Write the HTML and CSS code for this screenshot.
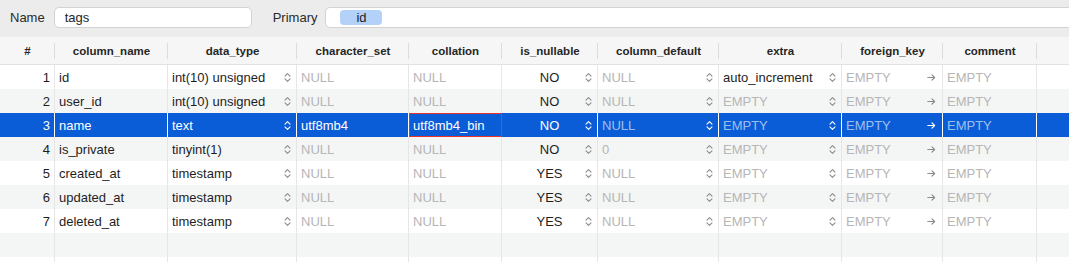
FILE: index.html
```html
<!DOCTYPE html>
<html lang="en">
<head>
  <meta charset="UTF-8">
  <title>Table structure - tags</title>
  <link rel="stylesheet" href="styles.css">
</head>
<body>
  <div class="toolbar">
    <label class="field-label">Name</label>
    <div class="text-box name-box">tags</div>
    <label class="field-label primary-label">Primary</label>
    <div class="text-box primary-box"><span class="token">id</span></div>
  </div>

  <div class="grid">
    <div class="row head">
      <div class="cell">#</div>
      <div class="cell">column_name</div>
      <div class="cell">data_type</div>
      <div class="cell">character_set</div>
      <div class="cell">collation</div>
      <div class="cell">is_nullable</div>
      <div class="cell">column_default</div>
      <div class="cell">extra</div>
      <div class="cell">foreign_key</div>
      <div class="cell">comment</div>
      <div class="cell"></div>
    </div>
    <div id="rows"></div>
    <div class="row filler">
      <div class="cell"></div><div class="cell"></div><div class="cell"></div><div class="cell"></div>
      <div class="cell"></div><div class="cell"></div><div class="cell"></div><div class="cell"></div>
      <div class="cell"></div><div class="cell"></div><div class="cell"></div>
    </div>
    <div class="row tail">
      <div class="cell"></div><div class="cell"></div><div class="cell"></div><div class="cell"></div>
      <div class="cell"></div><div class="cell"></div><div class="cell"></div><div class="cell"></div>
      <div class="cell"></div><div class="cell"></div><div class="cell"></div>
    </div>
  </div>

  <script>
    // column list for the tags table
    const columns = [
      ['id', 'int(10) unsigned', null, null, 'NO', null, 'auto_increment'],
      ['user_id', 'int(10) unsigned', null, null, 'NO', null, null],
      ['name', 'text', 'utf8mb4', 'utf8mb4_bin', 'NO', null, null],
      ['is_private', 'tinyint(1)', null, null, 'NO', '0', null],
      ['created_at', 'timestamp', null, null, 'YES', null, null],
      ['updated_at', 'timestamp', null, null, 'YES', null, null],
      ['deleted_at', 'timestamp', null, null, 'YES', null, null]
    ];
    const selected = 2;

    const stepper = '<svg class="stepper" width="7" height="11" viewBox="0 0 7 11"><path d="M1 4.2 L3.5 1.7 L6 4.2 M1 6.8 L3.5 9.3 L6 6.8" fill="none" stroke-width="1.1" stroke-linecap="round" stroke-linejoin="round"/></svg>';
    const arrow = '<svg class="arrow" width="9" height="9" viewBox="0 0 9 9"><path d="M0.8 4.5 H7.6 M5 1.9 L7.6 4.5 L5 7.1" fill="none" stroke-width="1.2" stroke-linecap="round" stroke-linejoin="round"/></svg>';

    function value(v, fallback) {
      if (v === null) return '<span class="muted">' + fallback + '</span>';
      return v;
    }

    const rowsEl = document.getElementById('rows');
    columns.forEach(function(c, i) {
      const row = document.createElement('div');
      row.className = 'row' + (i % 2 ? ' alt' : '') + (i === selected ? ' selected' : '');
      row.innerHTML =
        '<div class="cell num">' + (i + 1) + '</div>' +
        '<div class="cell">' + c[0] + '</div>' +
        '<div class="cell pick"><span class="val">' + c[1] + '</span>' + stepper + '</div>' +
        '<div class="cell">' + value(c[2], 'NULL') + '</div>' +
        '<div class="cell' + (i === selected ? ' editing' : '') + '">' + value(c[3], 'NULL') + '</div>' +
        '<div class="cell pick center"><span class="val">' + c[4] + '</span>' + stepper + '</div>' +
        '<div class="cell pick"><span class="val">' + (c[5] === '0' ? '<span class="muted">0</span>' : value(c[5], 'NULL')) + '</span>' + stepper + '</div>' +
        '<div class="cell pick"><span class="val">' + value(c[6], 'EMPTY') + '</span>' + stepper + '</div>' +
        '<div class="cell pick"><span class="val"><span class="muted">EMPTY</span></span>' + arrow + '</div>' +
        '<div class="cell"><span class="muted">EMPTY</span></div>' +
        '<div class="cell"></div>';
      rowsEl.appendChild(row);
    });
  </script>
</body>
</html>
```

FILE: styles.css
```css
body {
  margin: 0;
  font-family: "Liberation Sans", Arial, sans-serif;
  font-size: 13px;
  color: #1e1e1e;
  background: #fff;
  overflow: hidden;
}

/* Top bar */
.toolbar {
  display: flex;
  align-items: center;
  height: 37px;
  padding: 0 0 2px 10px;
  box-sizing: border-box;
  background: #ececec;
}

.field-label {
  color: #2a2a2a;
  font-size: 13px;
  margin-right: 9px;
}

.primary-label {
  margin-left: 21px;
  margin-right: 8px;
}

.text-box {
  height: 21px;
  box-sizing: border-box;
  background: #fff;
  border: 1px solid #d3d3d3;
  border-radius: 5px;
  display: flex;
  align-items: center;
}

.name-box {
  width: 198px;
  padding-left: 10px;
}

.primary-box {
  flex: 1;
  margin-right: -8px;
  padding-left: 14px;
}

.token {
  display: inline-block;
  width: 42px;
  height: 15px;
  line-height: 15px;
  text-align: center;
  background: #b4d1f9;
  border-radius: 4px;
  font-size: 13px;
}

/* Grid */
.row {
  display: grid;
  grid-template-columns: 55px 113px 129px 112px 93px 96px 121px 123px 101px 94px 1fr;
  height: 24px;
  background: #fff;
}

.row.alt {
  background: #f4f5f5;
}

.cell {
  border-right: 1px solid #e6e6e6;
  display: flex;
  align-items: center;
  padding: 0 4px;
  white-space: nowrap;
  overflow: hidden;
  min-width: 0;
  box-sizing: border-box;
}

.cell:last-child {
  border-right: none;
}

.head {
  height: 28px;
  background: #f6f6f6;
  border-bottom: 1px solid #e2e2e2;
  box-sizing: border-box;
}

.head .cell {
  justify-content: center;
  font-weight: bold;
  font-size: 11.5px;
  color: #262626;
  border-right: none;
  position: relative;
  padding-top: 1px;
}

.head .cell::after {
  content: "";
  position: absolute;
  right: 0;
  top: 6px;
  bottom: 5px;
  width: 1px;
  background: #dcdcdc;
}

.head .cell:last-child::after {
  display: none;
}

.num {
  justify-content: flex-end;
}

.pick {
  justify-content: space-between;
  padding-right: 5px;
}

.pick.center .val {
  flex: 1;
  text-align: center;
  padding-left: 8px;
}

.muted {
  color: #b6b6b6;
}

.stepper path,
.arrow path {
  stroke: #8c8c8c;
}

.arrow {
  margin-right: 1px;
}

/* Selected row */
.row.selected {
  background: #0b5cd7;
  color: #fff;
}

.row.selected .cell {
  border-right-color: #fff;
}

.row.selected .cell:last-child {
  border-right: none;
}

.row.selected .muted {
  color: rgba(255, 255, 255, 0.62);
}

.row.selected .stepper path,
.row.selected .arrow path {
  stroke: #fff;
}

.row.selected .cell.editing {
  border: 1px solid #e8332c;
  padding-left: 3px;
}

.filler {
  background: #f4f5f5;
  height: 24px;
}

.tail {
  height: 5px;
}
```
